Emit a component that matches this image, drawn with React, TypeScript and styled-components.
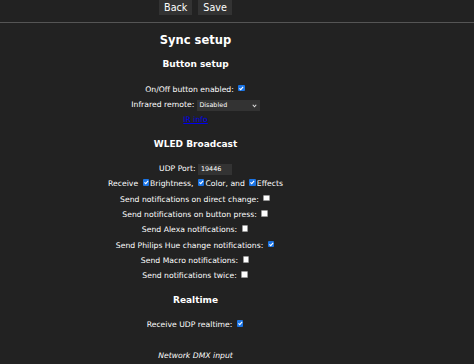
import styled, { createGlobalStyle } from 'styled-components';

const GlobalStyle = createGlobalStyle`
  html, body {
    margin: 0;
    background: #222;
  }

  body {
    overflow: hidden;
    font-family: 'DejaVu Sans', Verdana, sans-serif;
    font-size: 7.7px;
    line-height: 15.35px;
    color: #fff;
  }
`;

type BoxProps = {
  checked?: boolean;
};

function Checkbox({ checked }: BoxProps) {
  return (
    <Box $checked={checked}>
      {checked && (
        <svg viewBox="0 0 10 10" width="100%" height="100%">
          <path d="M2.2 5.2 L4.2 7.2 L7.9 2.9" fill="none" stroke="#fff" strokeWidth="1.7" />
        </svg>
      )}
    </Box>
  );
}

export default function App() {
  return (
    <Page>
      <GlobalStyle />
      <Column>
        <Actions>
          <Button type="button">Back</Button>
          <Button type="submit">Save</Button>
        </Actions>
      </Column>
      <Rule />
      <Column>
        <Title>Sync setup</Title>

        <Heading>Button setup</Heading>
        <Row>
          On/Off button enabled: <Checkbox checked />
        </Row>
        <Row>
          Infrared remote:{' '}
          <Select>
            Disabled
            <svg width="5" height="4" viewBox="0 0 10 8">
              <path d="M1.5 1.5 L5 5.5 L8.5 1.5" fill="none" stroke="#ddd" strokeWidth="2.2" />
            </svg>
          </Select>
        </Row>
        <Row>
          <Link href="#">IR info</Link>
        </Row>

        <Heading>WLED Broadcast</Heading>
        <Row>
          UDP Port: <NumberInput readOnly value="19446" />
        </Row>
        <Row>
          Receive <Checkbox checked />
          Brightness, <Checkbox checked />
          Color, and <Checkbox checked />
          Effects
        </Row>
        <Row>
          Send notifications on direct change: <Checkbox />
        </Row>
        <Row>
          Send notifications on button press: <Checkbox />
        </Row>
        <Row>
          Send Alexa notifications: <Checkbox />
        </Row>
        <Row>
          Send Philips Hue change notifications: <Checkbox checked />
        </Row>
        <Row>
          Send Macro notifications: <Checkbox />
        </Row>
        <Row>
          Send notifications twice: <Checkbox />
        </Row>

        <Heading>Realtime</Heading>
        <Row>
          Receive UDP realtime: <Checkbox checked />
        </Row>
        <Spacer />
        <Row>
          <i>Network DMX input</i>
        </Row>
      </Column>
    </Page>
  );
}

const Page = styled.div`
  width: 474px;
  height: 364px;
  overflow: hidden;
`;

const Column = styled.div`
  width: 391px;
  text-align: center;
`;

const Actions = styled.div`
  display: flex;
  justify-content: center;
  gap: 6px;
  height: 16px;
  margin-top: -1px;
`;

const Button = styled.button`
  height: 16px;
  padding: 0 4px;
  border: 1.7px solid #333;
  background: #333;
  color: #fff;
  font-family: 'DejaVu Sans', Verdana, sans-serif;
  font-size: 9.6px;
  line-height: 11px;
`;

const Rule = styled.hr`
  height: 1px;
  margin: 7px 0 0;
  border: 0;
  background: #555;
`;

const Title = styled.h2`
  margin: 10px 0 9px;
  font-size: 11.5px;
  line-height: 15.35px;
  font-weight: 700;
`;

const Heading = styled.h3`
  margin: 9px 0;
  font-size: 9px;
  line-height: 15.35px;
  font-weight: 700;
`;

const Row = styled.div`
  height: 15.35px;
  white-space: nowrap;
`;

const Spacer = styled.div`
  height: 15.35px;
`;

const Box = styled.span<{ $checked?: boolean }>`
  display: inline-block;
  box-sizing: border-box;
  width: 6.5px;
  height: 6.5px;
  margin: 0 1px 0 2px;
  vertical-align: 0.6px;
  border-radius: 1px;
  border: ${({ $checked }) => ($checked ? 'none' : '0.5px solid #999')};
  background: ${({ $checked }) => ($checked ? '#1b74e4' : '#fff')};

  & > svg {
    display: block;
  }
`;

const Select = styled.span`
  display: inline-flex;
  align-items: center;
  justify-content: space-between;
  box-sizing: border-box;
  width: 63px;
  height: 11px;
  padding: 0 3px 0 2.7px;
  background: #333;
  font-size: 6.4px;
  line-height: 11px;
  text-align: left;
`;

const NumberInput = styled.input`
  box-sizing: border-box;
  width: 34px;
  height: 11px;
  padding: 0 3px;
  border: 0;
  background: #333;
  color: #fff;
  font-family: 'DejaVu Sans', Verdana, sans-serif;
  font-size: 6.4px;
  outline: none;
`;

const Link = styled.a`
  color: #0000ee;
  text-decoration: underline;
`;
